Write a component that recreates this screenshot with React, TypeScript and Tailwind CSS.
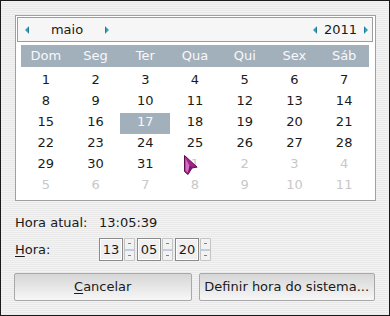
import React from 'react';

const font = { fontFamily: '"DejaVu Sans", Verdana, sans-serif' };

const days = ['Dom', 'Seg', 'Ter', 'Qua', 'Qui', 'Sex', 'Sáb'];

// May 2011 grid, with trailing days of June
const cells: { d: number; other: boolean }[] = [];
for (let i = 1; i <= 31; i++) cells.push({ d: i, other: false });
for (let i = 1; i <= 11; i++) cells.push({ d: i, other: true });

const ArrowLeft = () => (
  <svg width="5" height="8" viewBox="0 0 5 8">
    <path d="M4 0 L0 4 L4 8 Z" fill="#3d9bb3" />
    <path d="M4 1 L4 7 L3 6 L3 2 Z" fill="#1f7a92" />
  </svg>
);

const ArrowRight = () => (
  <svg width="5" height="8" viewBox="0 0 5 8">
    <path d="M1 0 L5 4 L1 8 Z" fill="#3d9bb3" />
    <path d="M1 1 L1 7 L2 6 L2 2 Z" fill="#1f7a92" />
  </svg>
);

const Spin: React.FC<{ value: string }> = ({ value }) => (
  <div className="flex items-stretch h-[23px] mr-[2px]">
    <div className="w-[24px] border border-[#8a8a8a] bg-[#f0f0f0] shadow-[inset_1px_1px_0_#ffffff,inset_-1px_-1px_0_#ffffff] flex items-center justify-center text-[13px] text-[#1a1a1a]">
      {value}
    </div>
    <div className="w-[11px] ml-[1px] border border-[#c4c4c4] rounded-[1px] bg-[#f2f2f2] flex flex-col">
      <div className="flex-1 flex items-center justify-center">
        <div className="w-[3px] h-[1px] bg-[#3d9bb3]" />
      </div>
      <div className="h-[2px] bg-[#c3cbe0]" />
      <div className="flex-1 flex items-center justify-center">
        <div className="w-[3px] h-[1px] bg-[#3d9bb3]" />
      </div>
    </div>
  </div>
);

const App: React.FC = () => {
  return (
    <div
      className="relative w-[390px] h-[316px] border border-[#1a1a1a] p-[14px] flex flex-col bg-[repeating-linear-gradient(to_bottom,#f3f3f3_0px,#f3f3f3_1px,#e9e9e9_1px,#e9e9e9_2px)] text-[13px] text-[#1a1a1a]"
      style={font}
    >
      {/* Calendar */}
      <div className="w-[361px] h-[188px] border border-[#a0a0a0] bg-white flex flex-col">
        <div className="mt-[1px] ml-[1px] mr-[2px] h-[25px] border border-[#9c9c9c] bg-[#f6f6f6] flex items-center">
          <div className="ml-[7px] flex items-center">
            <ArrowLeft />
          </div>
          <div className="w-[74px] text-center">maio</div>
          <ArrowRight />
          <div className="flex-1" />
          <ArrowLeft />
          <span className="ml-[6px] mr-[6px]">2011</span>
          <ArrowRight />
          <div className="w-[4px]" />
        </div>
        <div className="ml-[5px] mt-[3px] w-[348px] h-[22px] bg-[#a2b0bc] grid grid-cols-7 items-center text-[#f7f8fa]">
          {days.map((d) => (
            <div key={d} className="text-center">
              {d}
            </div>
          ))}
        </div>
        <div className="ml-[5px] mt-[4px] w-[348px] grid grid-cols-7">
          {cells.map((c, i) => {
            const sel = !c.other && c.d === 17;
            return (
              <div
                key={i}
                className={
                  'h-[21px] flex items-center justify-center pb-[3px] ' +
                  (sel ? 'bg-[#a2b0bc] text-[#f7f8fa]' : c.other ? 'text-[#c8c8c8]' : 'text-[#1a1a1a]')
                }
              >
                {c.d}
              </div>
            );
          })}
        </div>
      </div>

      {/* Current time */}
      <div className="mt-[12px] h-[20px] flex items-center">
        <span className="w-[84px]">Hora atual:</span>
        <span>13:05:39</span>
      </div>

      {/* Time entry */}
      <div className="mt-[5px] h-[23px] flex items-center">
        <span className="w-[84px]">
          <span className="underline underline-offset-2">H</span>ora:
        </span>
        <Spin value="13" />
        <Spin value="05" />
        <Spin value="20" />
      </div>

      {/* Buttons */}
      <div className="mt-[12px] -ml-[1px] flex gap-[7px]">
        <button className="w-[178px] h-[28px] border border-[#a8a8a8] rounded-[2px] bg-gradient-to-b from-[#d6d6d6] to-[#f7f7f7] flex items-center justify-center">
          <span>
            <span className="underline underline-offset-2">C</span>ancelar
          </span>
        </button>
        <button className="w-[177px] h-[28px] border border-[#a8a8a8] rounded-[2px] bg-gradient-to-b from-[#d6d6d6] to-[#f7f7f7] flex items-center justify-center">
          Definir hora do sistema...
        </button>
      </div>

      {/* Mouse pointer */}
      <svg className="absolute left-[182px] top-[153px]" width="16" height="22" viewBox="0 0 16 22">
        <path
          d="M1.5 1.5 L14 13 L9 14 L5 20.5 L1.5 17.5 Z"
          fill="#a3248e"
          stroke="#5e0a50"
          strokeWidth="1"
          strokeLinejoin="round"
        />
        <path d="M2.5 4 L2.5 16.5 L5 18.5 L6.5 12 Z" fill="#d270c0" />
        <path d="M6.5 12 L12 13 L8.5 13.6 L5 19 Z" fill="#7e1470" />
      </svg>
    </div>
  );
};

export default App;
